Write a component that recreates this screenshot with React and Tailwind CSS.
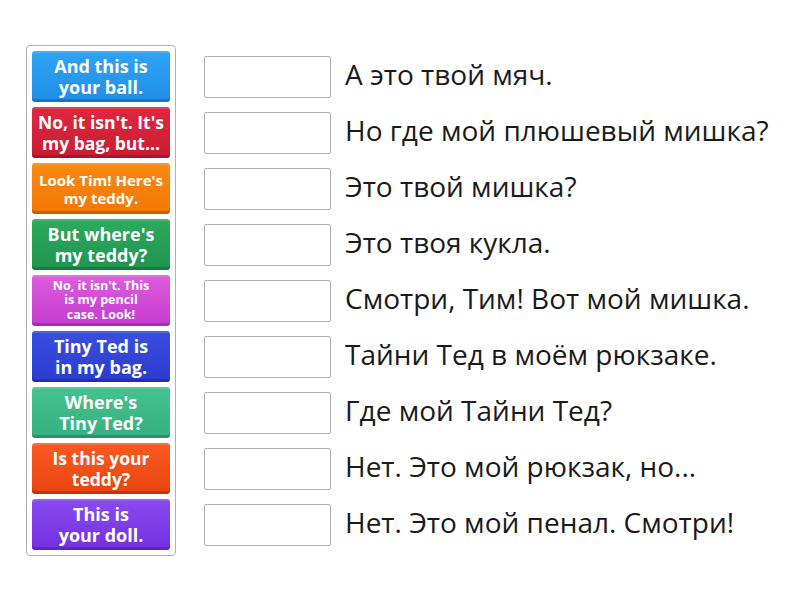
import React from 'react';

const tiles = [
  { text: ['And this is', 'your ball.'], bg: 'bg-[linear-gradient(#2ea3f5,#1f8fe6)]', size: 'text-[18px] leading-[21px]' },
  { text: ["No, it isn't. It's", 'my bag, but...'], bg: 'bg-[linear-gradient(#e0263f,#c91d34)]', size: 'text-[17.5px] leading-[21px]' },
  { text: ["Look Tim! Here's", 'my teddy.'], bg: 'bg-[linear-gradient(#fa8a12,#f37607)]', size: 'text-[15px] leading-[18px]' },
  { text: ["But where's", 'my teddy?'], bg: 'bg-[linear-gradient(#2bab5d,#1f9450)]', size: 'text-[18px] leading-[21px]' },
  { text: ["No, it isn't. This", 'is my pencil', 'case. Look!'], bg: 'bg-[linear-gradient(#dd5ddf,#c63acd)]', size: 'text-[12.5px] leading-[14.5px]' },
  { text: ['Tiny Ted is', 'in my bag.'], bg: 'bg-[linear-gradient(#3a4ee0,#2a3ccf)]', size: 'text-[18px] leading-[21px]' },
  { text: ["Where's", 'Tiny Ted?'], bg: 'bg-[linear-gradient(#45c291,#35b07f)]', size: 'text-[18px] leading-[21px]' },
  { text: ['Is this your', 'teddy?'], bg: 'bg-[linear-gradient(#fb5a22,#e8440f)]', size: 'text-[17.5px] leading-[21px]' },
  { text: ['This is', 'your doll.'], bg: 'bg-[linear-gradient(#8a4af0,#7230e0)]', size: 'text-[18px] leading-[21px]' },
];

const answers = [
  'А это твой мяч.',
  'Но где мой плюшевый мишка?',
  'Это твой мишка?',
  'Это твоя кукла.',
  'Смотри, Тим! Вот мой мишка.',
  'Тайни Тед в моём рюкзаке.',
  'Где мой Тайни Тед?',
  'Нет. Это мой рюкзак, но...',
  'Нет. Это мой пенал. Смотри!',
];

const App = () => {
  return (
    <div className="w-[800px] h-[600px] bg-white flex items-start pt-[45px] pl-[26px] font-['Open_Sans',sans-serif]">
      {/* Tiles column */}
      <div className="w-[150px] border border-[#b0b0b0] rounded-[4px] p-[5px] flex flex-col gap-[5px]">
        {tiles.map((t, i) => (
          <div
            key={i}
            className={`${t.bg} h-[51px] rounded-[3px] flex items-center justify-center text-white font-bold text-center shadow-[inset_0_-3px_0_rgba(0,0,0,0.18),inset_0_2px_0_rgba(255,255,255,0.12)] ${t.size}`}
          >
            <p className="whitespace-nowrap">
              {t.text.map((line, j) => (
                <React.Fragment key={j}>
                  {j > 0 && <br />}
                  {line}
                </React.Fragment>
              ))}
            </p>
          </div>
        ))}
      </div>

      {/* Targets */}
      <div className="ml-[28px] mt-[6px] flex flex-col gap-[5px]">
        {answers.map((a, i) => (
          <div key={i} className="h-[51px] flex items-center">
            <div className="w-[127px] h-[42px] border border-[#b0b0b0] rounded-[2px] bg-white" />
            <span className="ml-[14px] mb-[6px] text-[28px] leading-[34px] text-[#1a1a1a]">{a}</span>
          </div>
        ))}
      </div>
    </div>
  );
};

export default App;
